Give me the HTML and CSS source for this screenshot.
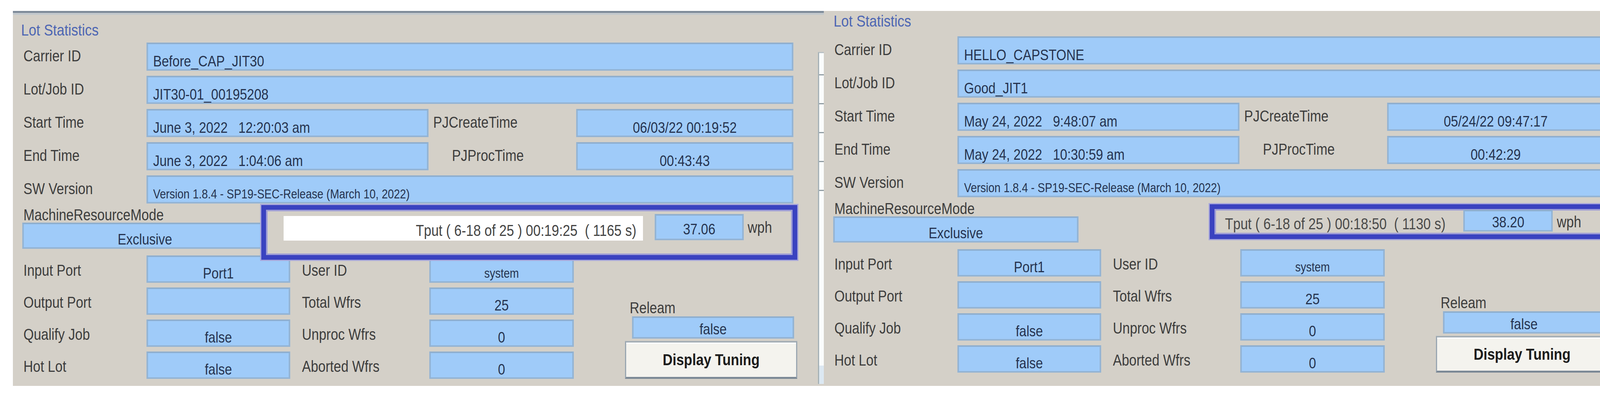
FILE: index.html
```html
<!DOCTYPE html>
<html lang="en">

<head>
    <meta charset="UTF-8">
    <meta name="viewport" content="width=device-width, initial-scale=1.0">
    <title>Lot Statistics</title>
    <link rel="stylesheet" href="styles.css">
</head>

<body>
    <div class="screen">

        <!-- first run -->
        <div class="window window-left">
            <div class="title-band"></div>
            <div class="window-body">
                <div class="panel panel-left">
                    <div class="heading"><span>Lot Statistics</span></div>
                    <div class="rows">
                        <div class="row">
                            <div class="lbl"><span>Carrier ID</span></div>
                            <div class="box box-full"><span>Before_CAP_JIT30</span></div>
                        </div>
                        <div class="row">
                            <div class="lbl"><span>Lot/Job ID</span></div>
                            <div class="box box-full"><span>JIT30-01_00195208</span></div>
                        </div>
                        <div class="row">
                            <div class="lbl"><span>Start Time</span></div>
                            <div class="box box-time"><span>June 3, 2022 &nbsp; 12:20:03 am</span></div>
                            <div class="lbl mid-lbl"><span>PJCreateTime</span></div>
                            <div class="box box-pj"><span>06/03/22 00:19:52</span></div>
                        </div>
                        <div class="row">
                            <div class="lbl"><span>End Time</span></div>
                            <div class="box box-time"><span>June 3, 2022 &nbsp; 1:04:06 am</span></div>
                            <div class="lbl mid-lbl mid-lbl-indent"><span>PJProcTime</span></div>
                            <div class="box box-pj"><span>00:43:43</span></div>
                        </div>
                        <div class="row">
                            <div class="lbl"><span>SW Version</span></div>
                            <div class="box box-full box-sw"><span>Version 1.8.4 - SP19-SEC-Release (March 10, 2022)</span></div>
                        </div>
                    </div>

                    <div class="mrm-section">
                        <div class="mrm">
                            <div class="lbl"><span>MachineResourceMode</span></div>
                            <div class="box box-mode"><span>Exclusive</span></div>
                        </div>
                        <div class="frame frame-left">
                            <div class="tput-white"><span>Tput ( 6-18 of 25 ) 00:19:25&nbsp; ( 1165 s)</span></div>
                            <div class="box rate rate-left"><span>37.06</span></div>
                            <div class="unit unit-left"><span>wph</span></div>
                        </div>
                    </div>

                    <div class="lower">
                        <div class="grid">
                            <div class="lbl"><span>Input Port</span></div>
                            <div class="box"><span>Port1</span></div>
                            <div class="lbl lbl2"><span>User ID</span></div>
                            <div class="box"><span class="small">system</span></div>

                            <div class="lbl"><span>Output Port</span></div>
                            <div class="box"></div>
                            <div class="lbl lbl2"><span>Total Wfrs</span></div>
                            <div class="box"><span>25</span></div>

                            <div class="lbl"><span>Qualify Job</span></div>
                            <div class="box"><span>false</span></div>
                            <div class="lbl lbl2"><span>Unproc Wfrs</span></div>
                            <div class="box"><span>0</span></div>

                            <div class="lbl"><span>Hot Lot</span></div>
                            <div class="box"><span>false</span></div>
                            <div class="lbl lbl2"><span>Aborted Wfrs</span></div>
                            <div class="box"><span>0</span></div>
                        </div>
                        <div class="side">
                            <div class="lbl"><span>Releam</span></div>
                            <div class="box box-releam"><span>false</span></div>
                            <div class="tune-btn"><span>Display Tuning</span></div>
                        </div>
                    </div>
                </div>

                <div class="strip">
                    <div class="seg seg-first"></div>
                    <div class="seg"></div>
                    <div class="seg"></div>
                    <div class="seg"></div>
                    <div class="seg"></div>
                    <div class="seg seg-fill"></div>
                    <div class="seg-end"></div>
                </div>
            </div>
        </div>

        <!-- second run -->
        <div class="window window-right">
            <div class="panel panel-right">
                <div class="heading"><span>Lot Statistics</span></div>
                <div class="rows">
                    <div class="row">
                        <div class="lbl"><span>Carrier ID</span></div>
                        <div class="box box-full"><span>HELLO_CAPSTONE</span></div>
                    </div>
                    <div class="row">
                        <div class="lbl"><span>Lot/Job ID</span></div>
                        <div class="box box-full"><span>Good_JIT1</span></div>
                    </div>
                    <div class="row">
                        <div class="lbl"><span>Start Time</span></div>
                        <div class="box box-time"><span>May 24, 2022 &nbsp; 9:48:07 am</span></div>
                        <div class="lbl mid-lbl"><span>PJCreateTime</span></div>
                        <div class="box box-pj"><span>05/24/22 09:47:17</span></div>
                    </div>
                    <div class="row">
                        <div class="lbl"><span>End Time</span></div>
                        <div class="box box-time"><span>May 24, 2022 &nbsp; 10:30:59 am</span></div>
                        <div class="lbl mid-lbl mid-lbl-indent"><span>PJProcTime</span></div>
                        <div class="box box-pj"><span>00:42:29</span></div>
                    </div>
                    <div class="row">
                        <div class="lbl"><span>SW Version</span></div>
                        <div class="box box-full box-sw"><span>Version 1.8.4 - SP19-SEC-Release (March 10, 2022)</span></div>
                    </div>
                </div>

                <div class="mrm-section">
                    <div class="mrm">
                        <div class="lbl"><span>MachineResourceMode</span></div>
                        <div class="box box-mode"><span>Exclusive</span></div>
                    </div>
                    <div class="frame frame-right">
                        <div class="tput-text"><span>Tput ( 6-18 of 25 ) 00:18:50&nbsp; ( 1130 s)</span></div>
                        <div class="box rate rate-right"><span>38.20</span></div>
                        <div class="unit unit-right"><span>wph</span></div>
                    </div>
                </div>

                <div class="lower">
                    <div class="grid">
                        <div class="lbl"><span>Input Port</span></div>
                        <div class="box"><span>Port1</span></div>
                        <div class="lbl lbl2"><span>User ID</span></div>
                        <div class="box"><span class="small">system</span></div>

                        <div class="lbl"><span>Output Port</span></div>
                        <div class="box"></div>
                        <div class="lbl lbl2"><span>Total Wfrs</span></div>
                        <div class="box"><span>25</span></div>

                        <div class="lbl"><span>Qualify Job</span></div>
                        <div class="box"><span>false</span></div>
                        <div class="lbl lbl2"><span>Unproc Wfrs</span></div>
                        <div class="box"><span>0</span></div>

                        <div class="lbl"><span>Hot Lot</span></div>
                        <div class="box"><span>false</span></div>
                        <div class="lbl lbl2"><span>Aborted Wfrs</span></div>
                        <div class="box"><span>0</span></div>
                    </div>
                    <div class="side">
                        <div class="lbl"><span>Releam</span></div>
                        <div class="box box-releam"><span>false</span></div>
                        <div class="tune-btn tune-btn-right"><span>Display Tuning</span></div>
                    </div>
                </div>
            </div>
        </div>

    </div>
</body>

</html>
```

FILE: styles.css
```css
*{
    margin: 0;
    padding: 0;
    box-sizing: border-box;
}
:root{
    --panel:#d4d0c8;
    --field:#9fcbf9;
    --field-border:#94b4d4;
    --label:#3d3d3d;
    --value:#26334f;
    --frame:#3a42c0;
}
body{
    background: #ffffff;
    font-family: "Liberation Sans", Arial, sans-serif;
}
.screen{
    display: flex;
    padding: 28px 0 0 33px;
}
.window{
    height: 960px;
    background-color: var(--panel);
}
.window-left{
    width: 2076px;
}
.window-right{
    width: 2059px;
}
.title-band{
    height: 10px;
    background-color: #7e8b99;
    border-bottom: 5px solid #c2c8cd;
}
.window-body{
    display: flex;
}

/* text is a little taller than it is wide in the old screen */
.panel span{
    display: inline-block;
    transform: scaleY(1.18);
}

.panel{
    padding-left: 27px;
}
.panel-left{
    width: 2061px;
}
.panel-right{
    width: 2059px;
}
.heading{
    font-size: 35px;
    line-height: 36px;
    color: #4d66b3;
}
.panel-left .heading{
    margin: 21px 0 0 -6px;
}
.panel-right .heading{
    margin: 8px 0 0 -2px;
}

.rows{
    display: flex;
    flex-direction: column;
    gap: 13px;
}
.panel-left .rows{
    margin-top: 14px;
}
.panel-right .rows{
    margin-top: 21px;
}
.row{
    display: flex;
    align-items: flex-start;
    height: 72px;
}
.lbl{
    width: 315px;
    flex-shrink: 0;
    padding-top: 16px;
    font-size: 34px;
    line-height: 36px;
    color: var(--label);
    white-space: nowrap;
}
.box{
    height: 72px;
    flex-shrink: 0;
    display: flex;
    align-items: flex-end;
    justify-content: center;
    padding: 0 13px 2px;
    background-color: var(--field);
    border: 4px solid var(--field-border);
    border-top-color: #8fafcf;
    font-size: 33px;
    line-height: 36px;
    color: var(--value);
    white-space: nowrap;
}
.box-full{
    width: 1656px;
    justify-content: flex-start;
}
.box-time{
    width: 722px;
    justify-content: flex-start;
}
.mid-lbl{
    width: 378px;
    padding-left: 12px;
}
.mid-lbl-indent{
    padding-left: 60px;
}
.box-pj{
    width: 556px;
}
.box-sw{
    font-size: 28px;
    line-height: 30px;
    padding-bottom: 5px;
}

/* machine mode + throughput */
.mrm-section{
    display: flex;
    align-items: flex-start;
}
.mrm{
    width: 628px;
    flex-shrink: 0;
    margin-left: -3px;
}
.mrm .lbl{
    width: auto;
    padding: 11px 0 0 3px;
}
.box-mode{
    width: 628px;
    height: 67px;
    margin-top: 2px;
}
.frame{
    position: relative;
    z-index: 1;
    flex-shrink: 0;
    display: flex;
    align-items: flex-start;
    border: 12px solid var(--frame);
    box-shadow: 0 0 0 3px #a6a5db, inset 0 0 0 4px #9e9dd6;
}
.frame-left{
    width: 1372px;
    height: 140px;
    margin: 4px 0 -28px -16px;
}
.frame-right{
    width: 1037px;
    height: 89px;
    margin: 18px 0 0 336px;
}
.tput-white{
    width: 920px;
    height: 63px;
    margin: 16px 0 0 45px;
    padding: 19px 17px 0 0;
    background-color: #ffffff;
    text-align: right;
    font-size: 34px;
    line-height: 36px;
    color: #444444;
    white-space: nowrap;
}
.tput-text{
    margin: 20px 0 0 27px;
    font-size: 34px;
    line-height: 36px;
    color: #4a4a4a;
    white-space: nowrap;
}
.rate-left{
    width: 228px;
    height: 67px;
    margin: 11px 0 0 30px;
    padding-bottom: 6px;
}
.rate-right{
    width: 229px;
    height: 56px;
    margin: 2px 0 0 46px;
}
.unit{
    margin-left: 10px;
    font-size: 34px;
    line-height: 36px;
    color: var(--label);
}
.unit-left{
    margin-top: 27px;
}
.unit-right{
    margin-top: 15px;
}

/* lower part */
.lower{
    display: flex;
    align-items: flex-end;
    margin-top: 17px;
}
.grid{
    display: grid;
    grid-template-columns: 315px 368px 356px 370px;
    grid-auto-rows: 70px;
    row-gap: 12px;
}
.grid .lbl{
    width: auto;
    padding-top: 20px;
}
.grid .lbl2{
    padding-left: 30px;
}
.grid .box{
    height: 70px;
}
.small{
    font-size: 28px;
}
.side{
    width: 441px;
    margin-left: 131px;
    display: flex;
    flex-direction: column;
}
.side .lbl{
    width: auto;
    padding: 0 0 0 12px;
}
.box-releam{
    width: 415px;
    height: 57px;
    margin: 4px 0 0 18px;
}
.tune-btn{
    height: 97px;
    margin-top: 6px;
    display: flex;
    align-items: center;
    justify-content: center;
    background-color: #f4f3ee;
    border: 3px solid #9aa6b1;
    border-top: 4px solid #a4aeb6;
    border-bottom: 5px solid #7c8996;
    box-shadow: inset 0 3px 0 #ffffff;
    font-size: 35px;
    font-weight: bold;
    line-height: 36px;
    color: #1c1c1c;
}
.tune-btn-right{
    height: 94px;
}

/* list edge between the two screens */
.strip{
    width: 15px;
    height: 850px;
    margin-top: 95px;
    display: flex;
    flex-direction: column;
    background-color: #fafcfc;
    border-left: 3px solid #a5b1b6;
    border-top: 3px solid #b7c0c4;
}
.seg{
    height: 74px;
    border-bottom: 3px solid #909ca2;
}
.seg-first{
    height: 57px;
}
.seg-fill{
    flex: 1;
    border-bottom: none;
}
.seg-end{
    height: 47px;
    background-color: #dce8f2;
}
```
